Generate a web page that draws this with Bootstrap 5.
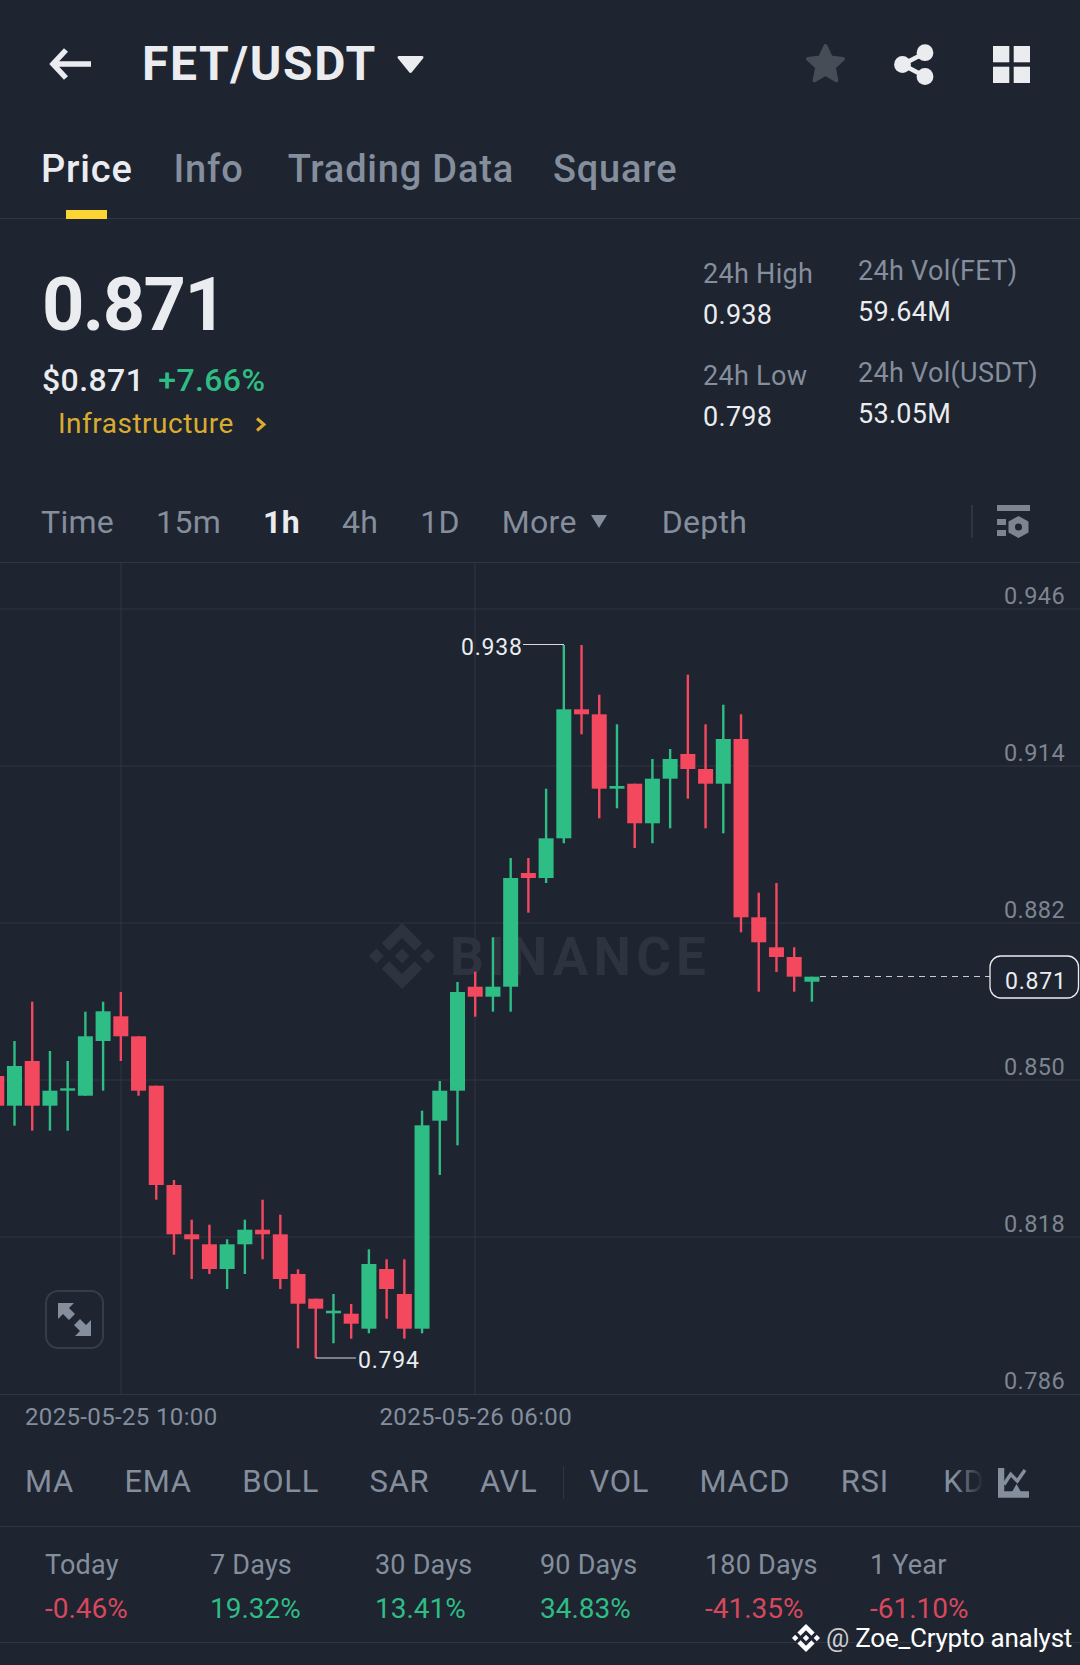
<!DOCTYPE html>
<html lang="en">
<head>
  <meta charset="UTF-8"/>
  <title>FET/USDT</title>
  <meta name="viewport" content="width=device-width, initial-scale=1"/>
  <link href="https://cdn.jsdelivr.net/npm/bootstrap@5.3.0/dist/css/bootstrap.min.css" rel="stylesheet"/>
  <style>
    body { background:#1e2430; color:#eaecef; font-family:Roboto,"Liberation Sans",sans-serif; width:1080px; height:1665px; overflow:hidden; position:relative; }
    .dim { color:#848e9c; }
    .up { color:#2ebd85; }
    .down { color:#d8485c; }
    .rule { border-bottom:1px solid #2f3641; }

    .topbar { height:128px; padding-left:49px; }
    .pair { font-size:48px; font-weight:700; line-height:1; margin-left:51px; margin-right:20px; letter-spacing:1.6px; }
    .top-icons { margin-left:auto; margin-right:50px; gap:48px; }
    .share-icon { margin-right:11px; }

    .tabs-bar { height:91px; padding-left:41px; gap:41px; }
    .tabs-bar .nav-link { padding:0; height:91px; line-height:82px; font-size:38px; color:#848e9c; font-weight:500; letter-spacing:.8px; position:relative; }
    .tabs-bar .nav-link.active { color:#eaecef; }
    .tabs-bar .nav-link.active::after { content:""; position:absolute; left:25px; bottom:0; width:41px; height:9px; background:#fcd535; }
    .tab-trading { margin-left:3px; }
    .tab-square { margin-left:-2px; }

    .quote { height:266px; padding:0 0 0 42px; }
    .last-price { font-size:74px; font-weight:700; line-height:1; margin-top:49px; letter-spacing:-1.6px; }
    .sub-price { font-size:32px; font-weight:500; line-height:36px; margin-top:20px; gap:14px; letter-spacing:.4px; }
    .sector { color:#d9ac2f; font-size:28px; line-height:34px; margin:9px 0 0 16px; gap:21px; letter-spacing:.5px; }
    .stats { margin-left:auto; width:377px; padding-top:35px; font-size:27px; letter-spacing:.3px; }
    .stat-col { width:155px; }
    .stat-col.lower { padding-top:3px; }
    .stat-col.wider { width:222px; }
    .stat-label { color:#848e9c; line-height:34px; }
    .stat-value { line-height:34px; margin-top:7px; margin-bottom:27px; color:#eaecef; }

    .timebar { height:77px; padding:0 0 4px 41px; font-size:32px; color:#848e9c; gap:42px; letter-spacing:.3px; }
    .timebar .on { color:#eaecef; font-weight:700; }
    .more-item { gap:13px; }
    .depth-item { margin-left:12px; }
    .time-sep { width:2px; height:33px; background:#2f3641; margin-left:auto; margin-right:-18px; }
    .time-gear { margin-right:50px; }

    .chart-box { height:832px; border-top:1px solid #2f3641; position:relative; }
    .chart-box svg.plot { display:block; }
    .plot text { font-family:Roboto,"Liberation Sans",sans-serif; }
    .axis-text { font-size:23.5px; fill:#7d8591; text-anchor:end; letter-spacing:.4px; }
    .mark-text { font-size:23px; fill:#eaecef; letter-spacing:.8px; }
    .expand-btn { position:absolute; left:45px; top:727px; width:59px; height:59px; border:2px solid #363d49; border-radius:13px; }

    .date-row { height:41px; padding:3px 0 0 25px; font-size:24px; color:#848e9c; border-top:1px solid #2f3641; letter-spacing:.35px; }
    .date-row span:last-child { margin-left:162px; }

    .indi-row { height:92px; padding:4px 0 0 25px; font-size:31px; color:#848e9c; position:relative; letter-spacing:.7px; }
    .indi-list { gap:50.5px; width:966px; margin-right:7px; white-space:nowrap; position:relative; }
    .indi-list::after { content:""; position:absolute; right:0; top:0; bottom:0; width:36px; background:linear-gradient(to right, rgba(30,36,48,0), #1e2430 80%); }
    .indi-sep { width:1px; height:33px; background:#2f3641; margin:0 -25px; flex:none; }
    .indi-last { margin-left:4px; }

    .perf-row { height:116px; padding:20px 45px 0 45px; }
    .perf-inner { width:990px; font-size:27px; letter-spacing:.2px; }
    .perf-inner .dim { line-height:36px; }
    .perf-val { line-height:36px; margin-top:8px; font-size:28px; letter-spacing:0; }

    .stamp { position:absolute; left:792px; top:1624px; gap:6px; font-size:26px; color:#fff; line-height:28px; white-space:nowrap; letter-spacing:-.25px; }
    .stamp .at { color:#c9ccd1; }
  </style>
</head>
<body>
  <!-- Pair header -->
  <div class="topbar d-flex align-items-center">
    <svg width="42" height="32" viewBox="0 0 42 32"><path d="M17 2 4 16l13 14M5 16h37" fill="none" stroke="#eaecef" stroke-width="5.500"/></svg>
    <span class="pair">FET/USDT</span>
    <svg width="27" height="19" viewBox="0 0 27 19"><path d="M2 1h23c1.5 0 2 1 1 2.500L15 17c-1 1.200-2 1.200-3 0L1 3.500C0 2 .5 1 2 1z" fill="#eaecef"/></svg>
    <div class="top-icons d-flex align-items-center">
      <svg width="41" height="42" viewBox="0 0 41 42"><path d="M20.500 3l5.200 11.400 12.300 1.500-9.200 8.500 2.600 13-10.900-6.500-10.900 6.500 2.600-13-9.200-8.500 12.300-1.500z" fill="#474d57" stroke="#474d57" stroke-linejoin="round" stroke-width="4"/></svg>
      <svg class="share-icon" width="40" height="41" viewBox="0 0 40 41"><path d="M31 9 8.500 20.500 31 32.500" fill="none" stroke="#eaecef" stroke-width="4.500"/><circle cx="31" cy="8.700" r="8.400" fill="#eaecef"/><circle cx="8.500" cy="20.500" r="8.400" fill="#eaecef"/><circle cx="31" cy="32.500" r="8.400" fill="#eaecef"/></svg>
      <svg width="37" height="37" viewBox="0 0 37 37" fill="#eaecef"><rect width="16.300" height="16.300"/><rect x="20.700" width="16.300" height="16.300"/><rect y="20.700" width="16.300" height="16.300"/><rect x="20.700" y="20.700" width="16.300" height="16.300"/></svg>
    </div>
  </div>

  <!-- Tabs -->
  <ul class="nav tabs-bar rule">
    <li class="nav-item"><a class="nav-link active" href="#">Price</a></li>
    <li class="nav-item"><a class="nav-link" href="#">Info</a></li>
    <li class="nav-item tab-trading"><a class="nav-link" href="#">Trading Data</a></li>
    <li class="nav-item tab-square"><a class="nav-link" href="#">Square</a></li>
  </ul>

  <!-- Price summary -->
  <div class="quote d-flex">
    <div>
      <div class="last-price">0.871</div>
      <div class="sub-price d-flex"><span>$0.871</span><span class="up">+7.66%</span></div>
      <div class="sector d-flex align-items-center">
        <span>Infrastructure</span>
        <svg width="12" height="15" viewBox="0 0 12 15"><path d="M2 1.500 9 7.500l-7 6" fill="none" stroke="#d9ac2f" stroke-width="3"/></svg>
      </div>
    </div>
    <div class="stats d-flex">
      <div class="stat-col lower">
        <div class="stat-label">24h High</div><div class="stat-value">0.938</div>
        <div class="stat-label">24h Low</div><div class="stat-value">0.798</div>
      </div>
      <div class="stat-col wider">
        <div class="stat-label">24h Vol(FET)</div><div class="stat-value">59.64M</div>
        <div class="stat-label">24h Vol(USDT)</div><div class="stat-value">53.05M</div>
      </div>
    </div>
  </div>

  <!-- Timeframes -->
  <div class="timebar d-flex align-items-center">
    <span>Time</span>
    <span>15m</span>
    <span class="on">1h</span>
    <span>4h</span>
    <span>1D</span>
    <div class="more-item d-flex align-items-center">
      <span>More</span>
      <svg width="18" height="13" viewBox="0 0 18 13"><path d="M1 0h16L9 13z" fill="#848e9c"/></svg>
    </div>
    <span class="depth-item">Depth</span>
    <div class="time-sep"></div>
    <svg class="time-gear" width="33" height="33" viewBox="0 0 33 33" fill="#7d8591"><rect width="33" height="6"/><rect y="14" width="9" height="6"/><rect y="25" width="9" height="6"/><path fill-rule="evenodd" d="M21.500 11l10 5.500v11l-10 5.500-10-5.500v-11zm0 7.500a3.500 3.500 0 1 0 0 7 3.500 3.500 0 0 0 0-7z"/></svg>
  </div>

  <!-- Chart -->
  <div class="chart-box">
    <svg class="plot" id="plot" width="1080" height="831" viewBox="0 563 1080 831">
      <g stroke="#2f3641" stroke-width="1">
        <path d="M0 609H1080M0 766H1080M0 923H1080M0 1080H1080M0 1237H1080M121 562V1394M475 562V1394"/>
      </g>
      <g fill="#2d3440">
        <svg x="369" y="923" width="66" height="66" viewBox="0 0 126.610 126.610"><path d="M38.730 53.200l24.590-24.580 24.600 24.600 14.300-14.310L63.320 0 24.430 38.900z"/><path d="M0 63.310L14.300 49l14.310 14.310L14.300 77.610z"/><path d="M38.730 73.410l24.590 24.590 24.600-24.600 14.310 14.290-38.900 38.910-38.910-38.880z"/><path d="M98 63.310l14.300-14.310 14.310 14.300-14.300 14.300z"/><path d="M77.830 63.300L63.320 48.780 48.810 63.280l14.510 14.500z"/></svg>
        <text x="450" y="975" font-size="53" font-weight="700" letter-spacing="5.200">BINANCE</text>
      </g>
      <g id="candles"></g>
      <text class="axis-text" x="1065" y="604">0.946</text>
      <text class="axis-text" x="1065" y="761">0.914</text>
      <text class="axis-text" x="1065" y="918">0.882</text>
      <text class="axis-text" x="1065" y="1075">0.850</text>
      <text class="axis-text" x="1065" y="1232">0.818</text>
      <text class="axis-text" x="1065" y="1389">0.786</text>
      <path d="M523 644.500H564M316 1358H356" stroke="#d5d8dc" stroke-width="1.200" fill="none"/>
      <text class="mark-text" x="461" y="655">0.938</text>
      <text class="mark-text" x="358" y="1368">0.794</text>
      <path d="M820 976.500H990" stroke="#c8ccd2" stroke-width="1.200" stroke-dasharray="6 5" fill="none"/>
      <rect x="990" y="956" width="88.500" height="42" rx="11" fill="#1e2430" stroke="#eaecef" stroke-width="1.300"/>
      <text class="mark-text" x="1005" y="989">0.871</text>
    </svg>
    <div class="expand-btn d-flex align-items-center justify-content-center">
      <svg width="35" height="35" viewBox="0 0 35 35" fill="#848e9c"><path d="M1 1h16l-5 5 6 6-6 6-6-6-5 5zM34 34H18l5-5-6-6 6-6 6 6 5-5z"/></svg>
    </div>
  </div>

  <div class="date-row d-flex align-items-center"><span>2025-05-25 10:00</span><span>2025-05-26 06:00</span></div>

  <!-- Indicators -->
  <div class="indi-row d-flex align-items-center rule">
    <div class="indi-list d-flex align-items-center">
      <span>MA</span><span>EMA</span><span>BOLL</span><span>SAR</span><span>AVL</span>
      <div class="indi-sep"></div>
      <span>VOL</span><span>MACD</span><span>RSI</span><span class="indi-last">KD</span>
    </div>
    <svg width="32" height="30" viewBox="0 0 32 30" fill="none" stroke="#848e9c"><path d="M3 0v26.500h28" stroke-width="6.500"/><path d="M6 16.500 12.700 6.300l6.600 6.700L27 2" stroke-width="3.500"/><path d="M14 24l4.500-8 4.500 8z" fill="#848e9c" stroke="none"/></svg>
  </div>

  <!-- Period performance -->
  <div class="perf-row rule">
    <div class="row g-0 perf-inner">
      <div class="col-2"><div class="dim">Today</div><div class="perf-val down">-0.46%</div></div>
      <div class="col-2"><div class="dim">7 Days</div><div class="perf-val up">19.32%</div></div>
      <div class="col-2"><div class="dim">30 Days</div><div class="perf-val up">13.41%</div></div>
      <div class="col-2"><div class="dim">90 Days</div><div class="perf-val up">34.83%</div></div>
      <div class="col-2"><div class="dim">180 Days</div><div class="perf-val down">-41.35%</div></div>
      <div class="col-2"><div class="dim">1 Year</div><div class="perf-val down">-61.10%</div></div>
    </div>
  </div>

  <div class="stamp d-flex align-items-center">
    <svg width="28" height="28" viewBox="0 0 126.610 126.610" fill="#fff"><path d="M38.730 53.200l24.590-24.580 24.600 24.600 14.300-14.310L63.320 0 24.430 38.900z"/><path d="M0 63.310L14.300 49l14.310 14.310L14.300 77.610z"/><path d="M38.730 73.410l24.590 24.590 24.600-24.600 14.310 14.290-38.900 38.910-38.910-38.880z"/><path d="M98 63.310l14.300-14.310 14.310 14.300-14.300 14.300z"/><path d="M77.830 63.300L63.320 48.780 48.810 63.280l14.510 14.500z"/></svg>
    <span><span class="at">@</span> Zoe_Crypto analyst</span>
  </div>

  <script>
    // candles: [colour, wick top, body top, body bottom, wick bottom], page y pixels
    const candles = [
      ['r',1076,1076,1105.7,1105.7],['g',1041,1066,1105.7,1125.7],['r',1001.7,1061,1105.7,1130.7],['g',1051,1090.7,1105.7,1130.7],
      ['g',1061,1088.3,1090.7,1130.7],['g',1011.7,1036.3,1095.7,1095.7],['g',1001.7,1011.3,1041,1090.7],['r',992,1016.3,1036.3,1061],
      ['r',1036.3,1036.3,1090.7,1095.7],['r',1085.7,1085.7,1185,1199.7],['r',1180,1185,1234.3,1254.7],['r',1219.7,1234.3,1239.3,1279],
      ['r',1224.7,1244.3,1269,1274],['g',1239.3,1244.3,1269,1289],['g',1219.7,1229.7,1244.3,1274],['r',1199.7,1229.7,1234.3,1259.3],
      ['r',1214.7,1234.3,1279,1289],['r',1269.3,1274,1303.7,1348.3],['r',1298.7,1298.7,1308.7,1358.3],['g',1294,1310.7,1313.3,1343.3],
      ['r',1304,1313.7,1323.7,1338.7],['g',1249.3,1264,1328.7,1333.3],['r',1259.3,1269,1289,1318.7],['r',1259.3,1294,1328.7,1338.7],
      ['g',1110.7,1125.3,1328.7,1333.3],['g',1081,1090.7,1120.7,1175],['g',982,992,1090.7,1145.3],['r',971.7,986.7,996.7,1016.7],
      ['g',937.3,986.7,996.7,1011.7],['g',858,878,986.7,1011.7],['r',858,873,878,912.7],['g',788.7,838.3,878,883],
      ['g',645,709.3,838.3,843.3],['r',645,709.3,714.3,734.3],['r',694.7,714.3,788.7,818.3],['g',724.3,786,788.7,808.3],
      ['r',783.7,783.7,823.3,848],['g',759,778.7,823.3,843.3],['g',749,759,778.7,828.3],['r',674.7,754,769,798.7],
      ['r',724.3,769,783.7,828.3],['g',704.7,739,783.7,833.3],['r',714.3,739,917.3,932.3],['r',892.7,917.3,942.3,991.7],
      ['r',883,947.3,957,972],['r',947.3,957,976.7,991.7],['g',976.7,976.7,981.7,1001.7]
    ];
    const colors = { r:'#f4485f', g:'#2ebd85' };
    let svg = '';
    candles.forEach((c, n) => {
      const x = 14.5 + (n - 1) * 17.72;
      svg += `<rect x="${x - 1.2}" y="${c[1]}" width="2.4" height="${c[4] - c[1]}" fill="${colors[c[0]]}"/>`;
      svg += `<rect x="${x - 7.5}" y="${c[2]}" width="15" height="${c[3] - c[2]}" fill="${colors[c[0]]}"/>`;
    });
    document.getElementById('candles').innerHTML = svg;
  </script>
  <script src="https://cdn.jsdelivr.net/npm/bootstrap@5.3.0/dist/js/bootstrap.bundle.min.js"></script>
</body>
</html>
